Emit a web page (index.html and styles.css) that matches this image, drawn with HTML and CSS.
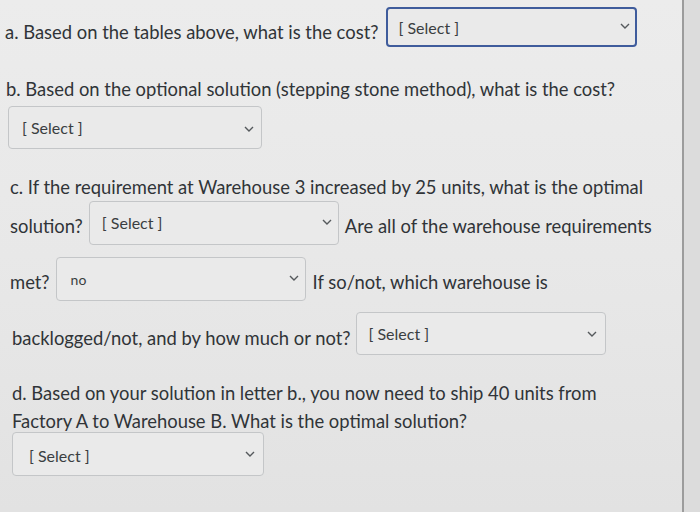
FILE: index.html
```html
<!DOCTYPE html>
<html>
<head>
<meta charset="utf-8">
<link rel="stylesheet" href="styles.css">
</head>
<body>
<div class="page">
  <div class="row row-a">
    <span class="txt">a. Based on the tables above, what is the cost?</span>
    <div class="sel sel-focus"><span class="val">[ Select ]</span><svg class="chev" viewBox="0 0 10 6"><path d="M1 1l4 4 4-4"/></svg></div>
  </div>

  <div class="block block-b">
    <div class="line">b. Based on the optional solution (stepping stone method), what is the cost?</div>
    <div class="sel sel-b"><span class="val">[ Select ]</span><svg class="chev" viewBox="0 0 10 6"><path d="M1 1l4 4 4-4"/></svg></div>
  </div>

  <div class="block block-c">
    <div class="line">c. If the requirement at Warehouse 3 increased by 25 units, what is the optimal</div>
    <div class="row row-c2">
      <span class="txt">solution?</span>
      <div class="sel"><span class="val">[ Select ]</span><svg class="chev" viewBox="0 0 10 6"><path d="M1 1l4 4 4-4"/></svg></div>
      <span class="txt">Are all of the warehouse requirements</span>
    </div>
    <div class="row row-c3">
      <span class="txt">met?</span>
      <div class="sel"><span class="val val-no">no</span><svg class="chev" viewBox="0 0 10 6"><path d="M1 1l4 4 4-4"/></svg></div>
      <span class="txt">If so/not, which warehouse is</span>
    </div>
    <div class="row row-c4">
      <span class="txt">backlogged/not, and by how much or not?</span>
      <div class="sel"><span class="val">[ Select ]</span><svg class="chev" viewBox="0 0 10 6"><path d="M1 1l4 4 4-4"/></svg></div>
    </div>
  </div>

  <div class="block block-d">
    <div class="line">d. Based on your solution in letter b., you now need to ship 40 units from</div>
    <div class="line">Factory A to Warehouse B. What is the optimal solution?</div>
    <div class="sel sel-d"><span class="val">[ Select ]</span><svg class="chev" viewBox="0 0 10 6"><path d="M1 1l4 4 4-4"/></svg></div>
  </div>
</div>
</body>
</html>
```

FILE: styles.css
```css
html, body {
  margin: 0;
  padding: 0;
}
body {
  width: 700px;
  height: 512px;
  overflow: hidden;
  background: #dcdcdc;
  font-family: Lato, "Open Sans", sans-serif;
  color: #303438;
}
.page {
  width: 684px;
  height: 512px;
  box-sizing: border-box;
  border-right: 2px solid #9c9c9c;
  background: linear-gradient(180deg, #ececec 0%, #e8e8e8 50%, #e2e2e2 100%);
  padding-top: 7px;
}
.row {
  display: flex;
  align-items: center;
}
.txt, .line {
  font-size: 18.4px;
  line-height: 28px;
  white-space: nowrap;
}
.sel {
  position: relative;
  box-sizing: border-box;
  width: 250px;
  height: 44px;
  border: 1px solid #c4c6c8;
  border-radius: 4px;
  background: #eaeaea;
  display: flex;
  align-items: center;
  flex-shrink: 0;
}
.sel .val {
  font-size: 16px;
  color: #3a3e41;
  padding-left: 12px;
  margin-top: -1px;
}
.sel .val-no {
  font-size: 14px;
  padding-left: 14px;
  margin-top: 1px;
}
.chev {
  position: absolute;
  right: 6px;
  top: 50%;
  margin-top: -4px;
  width: 10px;
  height: 6px;
  fill: none;
  stroke: #55595c;
  stroke-width: 1.4;
}
.sel-focus {
  width: 251px;
  height: 40px;
  border: 2px solid #3f5c9c;
  border-radius: 4px;
  margin-left: 8px;
}
.sel-focus .val { padding-left: 10px; margin-top: 0; }
.sel-focus .chev { right: 5px; margin-top: -4px; }

.row-a { padding-left: 5px; }
.row-a .txt { margin-top: 10px; }

.block-b { padding-left: 6px; margin-top: 28px; }
.sel-b { width: 254px; height: 43px; margin-left: 2px; margin-top: 3px; }
.sel-b .chev { right: 7px; margin-top: -2px; }
.sel-b .val { margin-top: 0; padding-left: 13px; }

.block-c { padding-left: 8px; margin-top: 24px; }
.block-c > .line { padding-left: 2px; }
.row-c2 { padding-left: 2px; margin-top: 0; }
.row-c2 .sel { margin-left: 6px; margin-right: 6px; }
.row-c2 .txt { margin-top: 5px; }
.row-c3 { padding-left: 2px; margin-top: 12px; }
.row-c3 .sel { margin-left: 6px; margin-right: 7px; }
.row-c3 .txt { margin-top: 5px; }
.row-c4 { padding-left: 4px; margin-top: 11px; }
.row-c4 .sel { margin-left: 5px; height: 43px; }
.row-c4 .txt { margin-top: 8px; }
.row-c4 .chev { right: 8px; margin-top: -3px; }

.block-d { padding-left: 12px; margin-top: 24px; }
.sel-d { width: 252px; height: 44px; margin-top: -3px; }
.sel-d .val { margin-top: 2px; padding-left: 16px; }
.sel-d .chev { right: 8px; margin-top: -3px; }
```
